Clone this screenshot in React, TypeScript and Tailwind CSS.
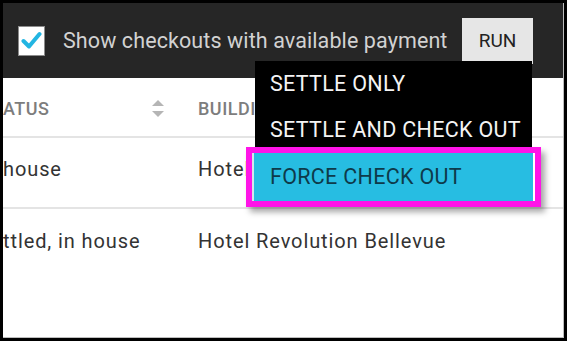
export default function App() {
  return (
    <div
      className="relative w-[567px] h-[341px] bg-black p-[3px] overflow-hidden"
      style={{ fontFamily: "Roboto, 'Noto Sans', sans-serif" }}
    >
      <div className="w-full h-full bg-white border-r border-b border-[#bdbdbd] flex flex-col">
        <header className="h-[75px] shrink-0 bg-[#262626] flex items-center pl-[15px] pr-[30px]">
          <div className="w-[27px] h-[30px] bg-white border border-[#8c8c8c] flex items-center justify-center">
            <svg width="21" height="19" viewBox="0 0 21 19">
              <path
                d="M2.5 10 L8 15.5 L18.5 3"
                fill="none"
                stroke="#22b5e2"
                strokeWidth="4"
                strokeLinecap="round"
                strokeLinejoin="round"
              />
            </svg>
          </div>
          <span className="ml-[18px] text-[21.5px] tracking-[0.1px] text-[#d2d2d2] leading-none">
            Show checkouts with available payment
          </span>
          <button className="ml-auto w-[71px] h-[46px] bg-[#e6e6e6] text-[19px] text-[#222] leading-none">
            RUN
          </button>
        </header>
        <div className="flex flex-col text-[20px] tracking-[0.9px]">
          <div className="h-[60px] flex items-center pt-[3px] border-b-2 border-[#e4e4e4] text-[#7d7d7d] font-medium text-[18px] tracking-[0.5px]">
            <div className="w-[195px] flex items-center">
              <span className="w-[149px]">ATUS</span>
              <svg width="12" height="17" viewBox="0 0 12 17">
                <path d="M6 0 L12 6 L0 6 Z" fill="#b5b5b5" />
                <path d="M0 11 L12 11 L6 17 Z" fill="#b5b5b5" />
              </svg>
            </div>
            <span>BUILDING</span>
          </div>
          <div className="h-[71px] flex items-center pb-[7px] border-b-2 border-[#e4e4e4] text-[#333]">
            <span className="w-[195px]">house</span>
            <span>Hotel</span>
          </div>
          <div className="h-[64px] flex items-center text-[#333]">
            <span className="w-[195px]">ttled, in house</span>
            <span>Hotel Revolution Bellevue</span>
          </div>
        </div>
      </div>

      <div className="absolute left-[255px] top-[61px] w-[277px] bg-black flex flex-col text-[21.5px] tracking-[0.3px] leading-none">
        <div className="h-[46px] flex items-center pl-[15px] text-[#f4f4f4]">SETTLE ONLY</div>
        <div className="h-[46px] flex items-center pl-[15px] text-[#f4f4f4]">SETTLE AND CHECK OUT</div>
        <div className="h-[48px] -ml-[3px] w-[281px] flex items-center pl-[16px] bg-[#27bde2] border-l-2 border-[#d3e7ec] text-[#0e3a4a]">
          FORCE CHECK OUT
        </div>
      </div>
      <div className="absolute left-[246px] top-[147px] w-[295px] h-[60px] border-[6px] border-[#ff14e8] shadow-[4px_5px_6px_rgba(0,0,0,0.35)] pointer-events-none" />
    </div>
  );
}
